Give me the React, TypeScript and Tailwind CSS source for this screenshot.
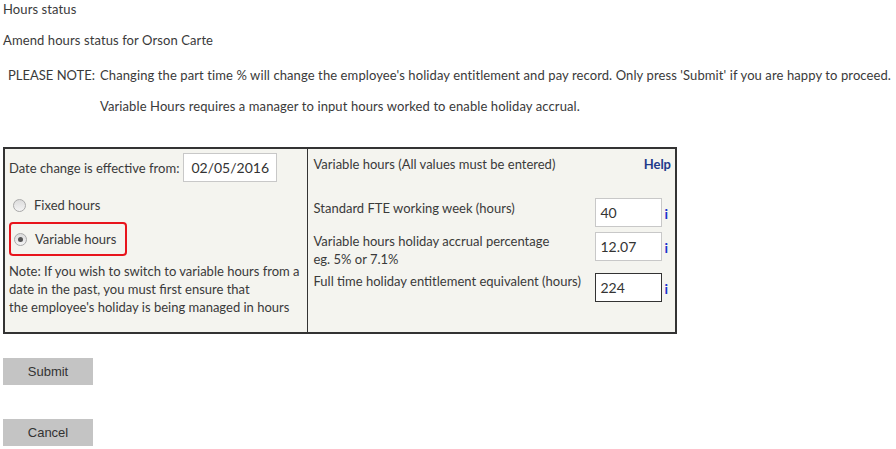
import React from "react";

const font = { fontFamily: "Lato, 'Open Sans', sans-serif" };

function Radio({ checked }: { checked?: boolean }) {
  return (
    <span className="relative inline-flex h-[13px] w-[13px] shrink-0 items-center justify-center rounded-full border border-[#a9a9a9] bg-gradient-to-b from-[#dcdcdc] to-[#f4f4f4]">
      {checked && <span className="h-[5px] w-[5px] rounded-full bg-[#555]" />}
    </span>
  );
}

function Field({ value, dark }: { value: string; dark?: boolean }) {
  return (
    <div
      className={`flex h-[29px] w-[67px] items-center bg-white pl-[5px] text-[14px] text-[#333] ${
        dark ? "border border-[#333]" : "border border-[#c8c8c8]"
      }`}
    >
      {value}
    </div>
  );
}

function Info() {
  return (
    <div className="flex h-[29px] items-center pl-[3px] pt-[3px] text-[14px] font-bold leading-[18px] text-[#1a33cc]">
      i
    </div>
  );
}

export default function App() {
  return (
    <div className="min-h-[449px] bg-white pl-[3px] text-[13px] leading-[18px] text-[#3a3a3a]" style={font}>
      <div className="tracking-[0.1px]">Hours status</div>
      <div className="mt-[13px] tracking-[0.1px]">Amend hours status for Orson Carte</div>

      <div className="mt-[17px] grid grid-cols-[92px_1fr] gap-y-[13px] pl-[5px] tracking-[0.1px]">
        <div className="tracking-normal">PLEASE NOTE:</div>
        <div>
          Changing the part time % will change the employee's holiday entitlement and pay record. Only press 'Submit' if
          you are happy to proceed.
        </div>
        <div />
        <div>Variable Hours requires a manager to input hours worked to enable holiday accrual.</div>
      </div>

      <table className="mt-[32px] w-[674px] table-fixed border-collapse border-2 border-[#333] bg-[#f4f4ef]">
        <colgroup>
          <col className="w-[303px]" />
          <col />
        </colgroup>
        <tbody>
          <tr className="h-[185px]">
            <td className="border-r border-[#333] px-[4px] pt-[4px] align-top">
              <div className="flex items-center gap-[4px]">
                <span>Date change is effective from:</span>
                <div className="flex h-[29px] w-[94px] items-center border border-[#c8c8c8] bg-white pl-[7px] text-[14px] text-[#333]">
                  02/05/2016
                </div>
              </div>
              <div className="mt-[14px] flex items-center gap-[8px] pl-[4px]">
                <Radio />
                <span>Fixed hours</span>
              </div>
              <div className="mt-[8px] flex h-[34px] w-[118px] items-center gap-[8px] rounded-[4px] border-2 border-[#e8141c] pl-[3px]">
                <Radio checked />
                <span>Variable hours</span>
              </div>
              <div className="mt-[6px] whitespace-nowrap">
                Note: If you wish to switch to variable hours from a
                <br />
                date in the past, you must first ensure that
                <br />
                the employee's holiday is being managed in hours
              </div>
            </td>
            <td className="pl-[6px] pr-[4px] pt-[6px] align-top">
              <div className="flex items-start justify-between">
                <span>Variable hours (All values must be entered)</span>
                <span className="font-bold text-[#1e3a8a]">Help</span>
              </div>
              <div className="mt-[25px] grid grid-cols-[281px_67px_1fr] gap-y-[5px]">
                <div className="pt-[1px]">Standard FTE working week (hours)</div>
                <Field value="40" />
                <Info />

                <div>
                  Variable hours holiday accrual percentage
                  <br />
                  eg. 5% or 7.1%
                </div>
                <Field value="12.07" />
                <Info />

                <div className="-mt-px whitespace-nowrap">Full time holiday entitlement equivalent (hours)</div>
                <Field value="224" dark />
                <Info />
              </div>
            </td>
          </tr>
        </tbody>
      </table>

      <div className="mt-[24px] flex flex-col gap-[34px]" style={{ fontFamily: "'Liberation Sans', Arial, sans-serif" }}>
        <button className="h-[27px] w-[90px] bg-[#c4c4c4] text-[13px] text-[#333]">Submit</button>
        <button className="h-[27px] w-[90px] bg-[#c4c4c4] text-[13px] text-[#333]">Cancel</button>
      </div>
    </div>
  );
}
